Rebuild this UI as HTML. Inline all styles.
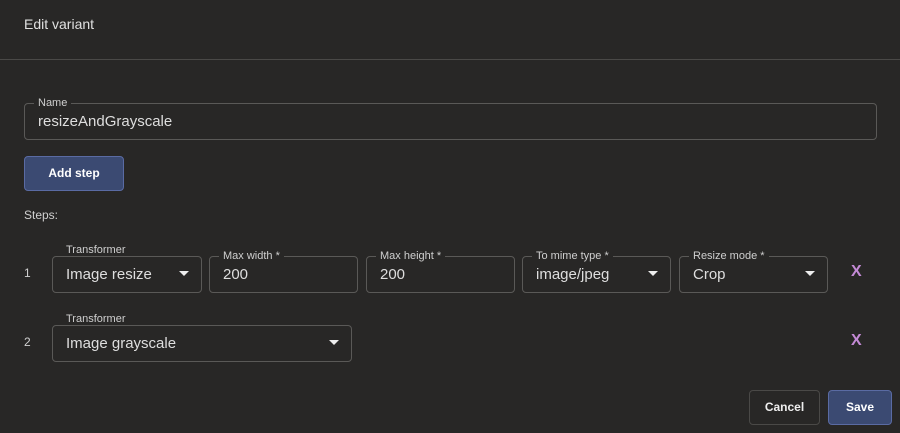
<!DOCTYPE html>
<html><head><style>
body{margin:0;width:900px;height:433px;background:#282726;font-family:"Liberation Sans",Roboto,sans-serif;color:#e6e6e6;position:relative;overflow:hidden}
.a{position:absolute}
.f{position:absolute;border:1px solid #5a5957;border-radius:4px;box-sizing:border-box;height:36px}
.f .l{position:absolute;top:-8px;left:9px;padding:0 4px;background:#282726;font-size:11px;color:#cfcfcf;line-height:14px}
.f .v{position:absolute;left:13px;top:9px;font-size:15px;color:#dedede}
.car{position:absolute;right:12px;top:14px;width:0;height:0;border-left:5px solid transparent;border-right:5px solid transparent;border-top:5px solid #eee}
.x{position:absolute;color:#c48ad6;font-weight:bold;font-size:16px}
.btn{position:absolute;box-sizing:border-box;border-radius:4px;font-size:12px;font-weight:bold;text-align:center;color:#fff}
</style></head><body>
<div class="a" style="left:24px;top:16px;font-size:14px;color:#e0e0e0">Edit variant</div>
<div class="a" style="left:0;top:59px;width:900px;height:1px;background:#4a4947"></div>
<div class="f" style="left:24px;top:103px;width:853px;height:37px"><span class="l">Name</span><span class="v" style="top:9px">resizeAndGrayscale</span></div>
<div class="btn" style="left:24px;top:156px;width:100px;height:35px;background:#3b4a72;border:1px solid #5a6ba3;line-height:33px">Add step</div>
<div class="a" style="left:24px;top:208px;font-size:12px;color:#d0d0d0">Steps:</div>
<div class="a" style="left:24px;top:266px;font-size:12px;color:#d0d0d0">1</div>
<div class="f" style="left:52px;top:256px;width:150px;height:37px"><span class="l" style="top:-14px;background:none">Transformer</span><span class="v">Image resize</span><span class="car"></span></div>
<div class="f" style="left:209px;top:256px;width:149px;height:37px"><span class="l">Max width *</span><span class="v">200</span></div>
<div class="f" style="left:366px;top:256px;width:149px;height:37px"><span class="l">Max height *</span><span class="v">200</span></div>
<div class="f" style="left:522px;top:256px;width:149px;height:37px"><span class="l">To mime type *</span><span class="v">image/jpeg</span><span class="car"></span></div>
<div class="f" style="left:679px;top:256px;width:149px;height:37px"><span class="l">Resize mode *</span><span class="v">Crop</span><span class="car"></span></div>
<div class="x" style="left:851px;top:263px">X</div>
<div class="a" style="left:24px;top:335px;font-size:12px;color:#d0d0d0">2</div>
<div class="f" style="left:52px;top:325px;width:300px;height:37px"><span class="l" style="top:-14px;background:none">Transformer</span><span class="v">Image grayscale</span><span class="car"></span></div>
<div class="x" style="left:851px;top:332px">X</div>
<div class="btn" style="left:749px;top:390px;width:71px;height:35px;border:1px solid #4a4947;line-height:33px;color:#eee">Cancel</div>
<div class="btn" style="left:828px;top:390px;width:64px;height:35px;background:#3b4a72;border:1px solid #5a6ba3;line-height:33px">Save</div>
</body></html>
